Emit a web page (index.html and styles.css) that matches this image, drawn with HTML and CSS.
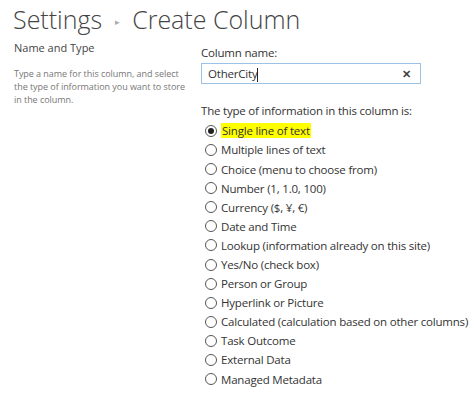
FILE: index.html
```html
<!DOCTYPE html>
<html lang="en">
<head>
    <meta charset="UTF-8">
    <title>Settings - Create Column</title>
    <link rel="stylesheet" href="styles.css">
</head>
<body>
    <h1 class="page-title">Settings <span class="crumb-arrow">&#9656;</span> Create Column</h1>
    <div class="form-area">
        <div class="section-info">
            <h3>Name and Type</h3>
            <p>Type a name for this column, and select<br>the type of information you want to store<br>in the column.</p>
        </div>
        <div class="section-fields">
            <label class="field-label">Column name:</label>
            <div class="text-box">
                <span class="value">OtherCity</span><span class="caret"></span>
                <span class="clear">&#10005;</span>
            </div>
            <div class="type-label">The type of information in this column is:</div>
            <ul class="type-list">
                <li><span class="radio checked"></span><span class="hl">Single line of text</span></li>
                <li><span class="radio"></span>Multiple lines of text</li>
                <li><span class="radio"></span>Choice (menu to choose from)</li>
                <li><span class="radio"></span>Number (1, 1.0, 100)</li>
                <li><span class="radio"></span>Currency ($, ¥, €)</li>
                <li><span class="radio"></span>Date and Time</li>
                <li><span class="radio"></span>Lookup (information already on this site)</li>
                <li><span class="radio"></span>Yes/No (check box)</li>
                <li><span class="radio"></span>Person or Group</li>
                <li><span class="radio"></span>Hyperlink or Picture</li>
                <li><span class="radio"></span>Calculated (calculation based on other columns)</li>
                <li><span class="radio"></span>Task Outcome</li>
                <li><span class="radio"></span>External Data</li>
                <li><span class="radio"></span>Managed Metadata</li>
            </ul>
        </div>
    </div>
</body>
</html>
```

FILE: styles.css
```css
body {
    margin: 0;
    background-color: #ffffff;
    font-family: 'Open Sans', 'Noto Sans', sans-serif;
    color: #333333;
    overflow: hidden;
}

.page-title {
    margin: 0;
    padding: 1px 0 0 13px;
    font-size: 25px;
    font-weight: 300;
    color: #444444;
    line-height: 36px;
    white-space: nowrap;
}

.crumb-arrow {
    font-size: 9px;
    color: #aaaaaa;
    vertical-align: middle;
    margin: 0 6px;
}

.form-area {
    display: flex;
}

.section-info {
    width: 173px;
    flex-shrink: 0;
    padding-left: 14px;
    margin-right: 14px;
}

.section-info h3 {
    margin: 0;
    font-size: 11px;
    font-weight: normal;
    color: #444444;
    line-height: 16px;
}

.section-info p {
    margin: 11px 0 0 0;
    font-size: 9px;
    letter-spacing: -0.05px;
    line-height: 13px;
    color: #777777;
    white-space: nowrap;
}

.section-fields {
    padding-top: 5px;
}

.field-label {
    display: block;
    font-size: 11.5px;
    letter-spacing: -0.2px;
    line-height: 16px;
    color: #333333;
}

.text-box {
    position: relative;
    width: 212px;
    height: 19px;
    margin-top: 2px;
    padding-left: 6px;
    border: 1px solid #9cc3e5;
    font-size: 11.5px;
    letter-spacing: -0.2px;
    line-height: 19px;
    color: #333333;
}

.caret {
    display: inline-block;
    width: 1px;
    height: 14px;
    background: #222222;
    vertical-align: middle;
}

.clear {
    position: absolute;
    right: 9px;
    top: 0;
    font-size: 11px;
    font-weight: bold;
    color: #444444;
}

.type-label {
    margin-top: 19px;
    font-size: 11.5px;
    letter-spacing: -0.2px;
    line-height: 16px;
    color: #333333;
}

.type-list {
    list-style: none;
    margin: 2px 0 0 0;
    padding: 0 0 0 4px;
}

.type-list li {
    height: 19.1px;
    display: flex;
    align-items: center;
    font-size: 11.5px;
    letter-spacing: -0.2px;
    color: #333333;
    white-space: nowrap;
}

.radio {
    width: 10px;
    height: 10px;
    border: 1px solid #555555;
    border-radius: 50%;
    margin-right: 4px;
    flex-shrink: 0;
    position: relative;
}

.radio.checked::after {
    content: "";
    position: absolute;
    left: 2px;
    top: 2px;
    width: 6px;
    height: 6px;
    border-radius: 50%;
    background: #222222;
}

.hl {
    background-color: #ffff00;
    padding: 0 1px;
}
```
